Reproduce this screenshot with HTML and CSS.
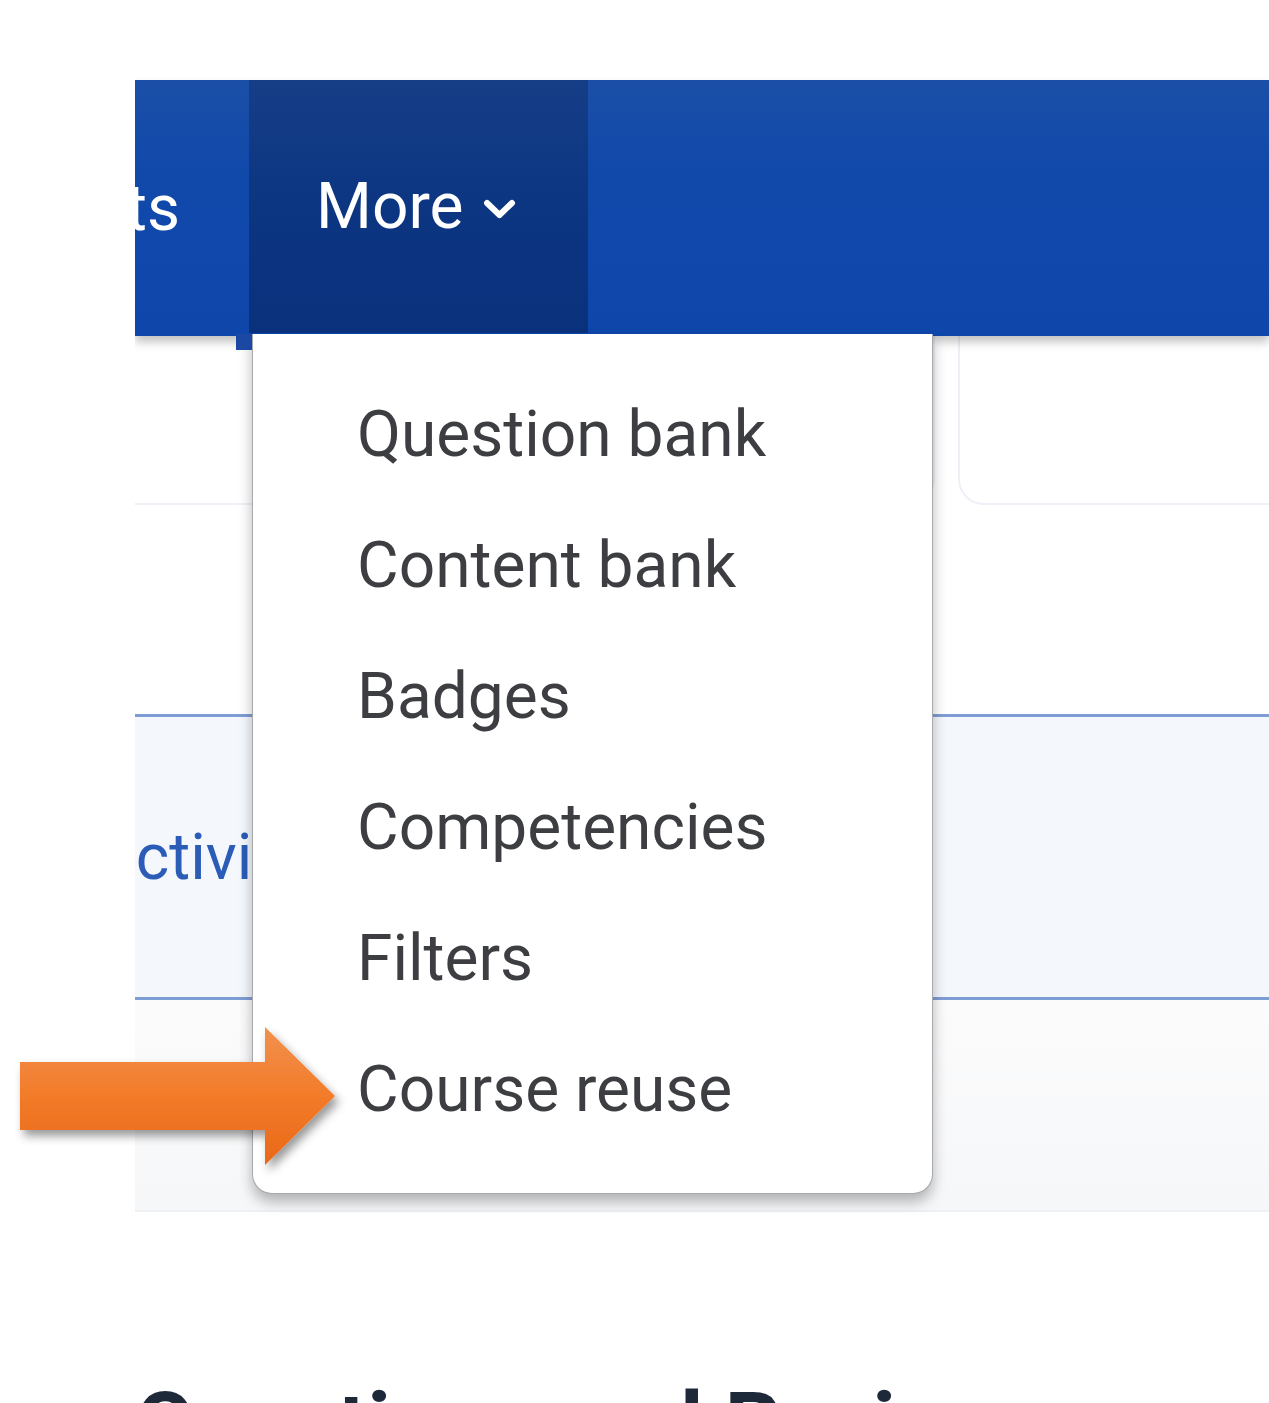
FILE: index.html
```html
<!DOCTYPE html>
<html lang="en">
<head>
<meta charset="utf-8">
<title>Course navigation - More menu</title>
<link rel="stylesheet" href="styles.css">
</head>
<body>
<div class="frame">
  <nav class="navbar">
    <div class="nav-item clipped">Reports</div>
    <div class="nav-item active">
      <span>More</span>
      <svg class="chevron" viewBox="0 0 33 22" width="33" height="22" aria-hidden="true">
        <polyline points="4,5 16.5,17 29,5" fill="none" stroke="#ffffff" stroke-width="6" stroke-linecap="round" stroke-linejoin="round"/>
      </svg>
      <div class="dropdown">
        <a class="dropdown-item">Question bank</a>
        <a class="dropdown-item">Content bank</a>
        <a class="dropdown-item">Badges</a>
        <a class="dropdown-item">Competencies</a>
        <a class="dropdown-item">Filters</a>
        <a class="dropdown-item">Course reuse</a>
      </div>
    </div>
  </nav>
  <div class="cards">
    <div class="card card-main"></div>
    <div class="card card-side"></div>
  </div>
  <div class="band"><span class="band-link">Activities</span></div>
  <div class="gray-area"></div>
  <h2 class="heading">Questions and Review</h2>
</div>
<svg class="arrow" viewBox="0 0 340 160" width="340" height="160" aria-hidden="true">
  <defs>
    <linearGradient id="arrowFill" x1="0" y1="0" x2="0" y2="1">
      <stop offset="0" stop-color="#f2914f"/>
      <stop offset="0.5" stop-color="#f27b29"/>
      <stop offset="1" stop-color="#e96818"/>
    </linearGradient>
    <filter id="arrowShadow" x="-10%" y="-10%" width="130%" height="140%">
      <feDropShadow dx="4" dy="6" stdDeviation="5" flood-color="#000000" flood-opacity="0.4"/>
    </filter>
  </defs>
  <path d="M0 35 H245 V0 L315 69 L245 138 V103 H0 Z" fill="url(#arrowFill)" filter="url(#arrowShadow)"/>
</svg>
</body>
</html>
```

FILE: styles.css
```css
html, body {
  margin: 0;
  padding: 0;
  background: #ffffff;
}

body {
  font-family: Roboto, "Liberation Sans", Arial, sans-serif;
  position: relative;
  width: 1269px;
  height: 1403px;
  overflow: hidden;
}

.frame {
  margin-left: 135px;
  padding-top: 80px;
  overflow: hidden;
  height: 1323px;
}

.navbar {
  position: relative;
  z-index: 3;
  display: flex;
  height: 256px;
  background: linear-gradient(#1b4fa7 0%, #1149ab 35%, #0f46aa 100%);
  box-shadow: 0 6px 9px rgba(0, 0, 0, 0.24);
}

.nav-item {
  display: flex;
  align-items: center;
  padding: 0 69px;
  color: #ffffff;
  font-size: 64px;
  white-space: nowrap;
}

.nav-item.clipped {
  margin-left: -178px;
  padding-left: 0;
}

.nav-item.active {
  position: relative;
  gap: 20px;
  padding: 0 72px 0 67px;
  height: 253px;
  background: linear-gradient(#163e87 0%, #0c3582 50%, #0a317c 100%);
}

.chevron {
  display: block;
  margin-top: 4px;
}

.dropdown {
  position: absolute;
  top: 254px;
  left: 3px;
  z-index: 5;
  box-sizing: border-box;
  width: 681px;
  padding: 35px 0 38px;
  background: #ffffff;
  border: 1px solid #a7a9ad;
  border-top: none;
  border-radius: 0 0 20px 20px;
  box-shadow: 0 8px 14px rgba(0, 0, 0, 0.28);
}

.dropdown::before {
  content: "";
  position: absolute;
  top: 0;
  left: -17px;
  width: 16px;
  height: 16px;
  background: #1a48a3;
}

.dropdown-item {
  display: block;
  padding: 17.5px 0 17.5px 104px;
  font-size: 64px;
  line-height: 96px;
  color: #3c3e41;
  white-space: nowrap;
}

.cards {
  display: flex;
  gap: 23px;
  height: 169px;
}

.card {
  box-sizing: border-box;
  height: 169px;
  border: 2px solid #edf0f6;
  border-top: none;
  border-radius: 0 0 26px 26px;
  background: #ffffff;
}

.card-main {
  width: 830px;
  margin-left: -30px;
  flex: none;
}

.card-side {
  flex: 1;
  margin-right: -40px;
}

.band {
  display: flex;
  align-items: center;
  box-sizing: border-box;
  height: 286px;
  margin-top: 209px;
  background: #f4f7fc;
  border-top: 3px solid #7f9dd5;
  border-bottom: 3px solid #7f9dd5;
}

.band-link {
  margin-left: -41px;
  font-size: 64px;
  color: #2a5cb8;
  white-space: nowrap;
}

.gray-area {
  height: 210px;
  background: linear-gradient(#fbfbfc, #f6f7f8);
  border-bottom: 2px solid #eef0f4;
}

.heading {
  margin: 159px 0 0;
  font-size: 88px;
  font-weight: 700;
  line-height: 1.2;
  color: #1d2939;
  white-space: nowrap;
}

.arrow {
  position: absolute;
  left: 20px;
  top: 1027px;
  z-index: 10;
  overflow: visible;
}
```
